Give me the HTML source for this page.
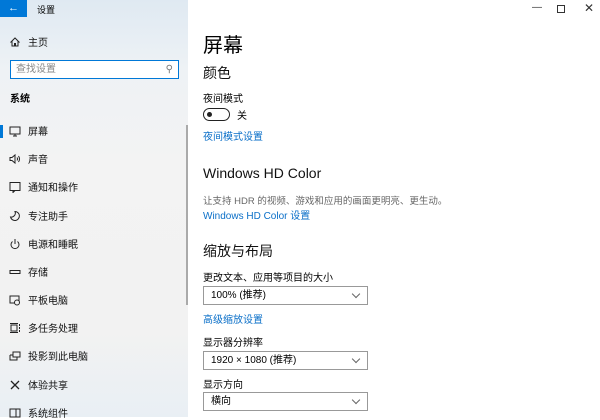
<!DOCTYPE html>
<html><head><meta charset="utf-8"><style>
*{margin:0;padding:0;box-sizing:border-box}
body{width:600px;height:417px;overflow:hidden;background:#fff;font-family:"Liberation Sans","Noto Sans CJK SC",sans-serif;color:#000;position:relative}
.side{position:absolute;left:0;top:0;width:188px;height:417px;background:linear-gradient(180deg,#dfe9f2 0,#eef2f5 70px,#f3f3f3 160px,#f2f2f2 330px,#e9eff4 417px)}
.a{position:absolute;white-space:nowrap}
.s{font-size:10px}
.nav{position:absolute;left:28px;font-size:10px;color:#111;margin-top:-2px}
.ic{position:absolute;left:9px;width:12px;height:12px}
.link{color:#0a6fc8;font-size:10px}
.dd{position:absolute;left:203px;width:165px;height:19px;border:1.5px solid #999;background:#fff;font-size:10px;padding:1px 0 0 7px;line-height:15px}
.dd:after{content:"";position:absolute;right:8px;top:4px;width:5px;height:5px;border-right:1px solid #666;border-bottom:1px solid #666;transform:rotate(45deg)}
</style></head><body>
<div class="side"></div>
<div class="a" style="left:0;top:0;width:27px;height:17px;background:#0078d7;color:#fff;font-size:11px;text-align:center;line-height:16px">←</div>
<div class="a s" style="left:37px;top:3px;font-size:9px">设置</div>
<svg class="ic" style="top:36px" viewBox="0 0 12 12"><path d="M1.5 6.5 6 2l4.5 4.5M3 5v5h2.5V7.5h1V10H9V5" fill="none" stroke="#222" stroke-width="1"/></svg>
<div class="nav" style="top:36px">主页</div>
<div class="a" style="left:10px;top:60px;width:169px;height:19px;border:1.5px solid #0078d7;background:#fff;font-size:10px;color:#888;padding:1px 0 0 5px;line-height:15px">查找设置<span style="position:absolute;right:5px;top:1px;color:#777">⚲</span></div>
<div class="a s" style="left:10px;top:90px;font-weight:bold">系统</div>
<div class="a" style="left:0;top:125px;width:3px;height:13px;background:#0078d7"></div>
<div class="a" style="left:186px;top:125px;width:2px;height:180px;background:#aaa"></div>
<svg class="ic" style="top:125px" viewBox="0 0 12 12"><rect x="1" y="2" width="10" height="7" fill="none" stroke="#222"/><path d="M4 11h4M6 9v2" stroke="#222"/></svg>
<div class="nav" style="top:125px">屏幕</div>
<svg class="ic" style="top:153px" viewBox="0 0 12 12"><path d="M1 4.5h2L6 2v8L3 7.5H1z" fill="none" stroke="#222"/><path d="M8 4.5q1 1.5 0 3M9.5 3q2 3 0 6" fill="none" stroke="#222"/></svg>
<div class="nav" style="top:153px">声音</div>
<svg class="ic" style="top:181px" viewBox="0 0 12 12"><rect x="1" y="1.5" width="10" height="8" fill="none" stroke="#222"/><path d="M4 9.5v2l2-2" fill="none" stroke="#222"/></svg>
<div class="nav" style="top:181px">通知和操作</div>
<svg class="ic" style="top:210px" viewBox="0 0 12 12"><path d="M6 1.5A4.5 4.5 0 1 1 1.5 7 4 4 0 0 0 6 1.5z" fill="none" stroke="#222"/></svg>
<div class="nav" style="top:210px">专注助手</div>
<svg class="ic" style="top:238px" viewBox="0 0 12 12"><path d="M3.5 3.5a4 4 0 1 0 5 0M6 1v5" fill="none" stroke="#222"/></svg>
<div class="nav" style="top:238px">电源和睡眠</div>
<svg class="ic" style="top:266px" viewBox="0 0 12 12"><rect x="1" y="4.5" width="10" height="3" fill="none" stroke="#222"/></svg>
<div class="nav" style="top:266px">存储</div>
<svg class="ic" style="top:294px" viewBox="0 0 12 12"><rect x="1" y="2" width="9" height="7" fill="none" stroke="#222"/><circle cx="8" cy="8.5" r="2.5" fill="#f2f2f2" stroke="#222"/></svg>
<div class="nav" style="top:294px">平板电脑</div>
<svg class="ic" style="top:322px" viewBox="0 0 12 12"><rect x="2" y="3" width="6" height="6" fill="none" stroke="#222"/><path d="M1 1.5h8M1 10.5h8M10.5 2v2M10.5 5v2M10.5 8v2" stroke="#222"/></svg>
<div class="nav" style="top:322px">多任务处理</div>
<svg class="ic" style="top:350px" viewBox="0 0 12 12"><rect x="4" y="2" width="7" height="5" fill="none" stroke="#222"/><path d="M1 5h3M1 5v5h7V7" fill="none" stroke="#222"/></svg>
<div class="nav" style="top:350px">投影到此电脑</div>
<svg class="ic" style="top:379px" viewBox="0 0 12 12"><path d="M2 2l8 8M10 2l-8 8" stroke="#222" stroke-width="1.3"/></svg>
<div class="nav" style="top:379px">体验共享</div>
<svg class="ic" style="top:407px" viewBox="0 0 12 12"><rect x="1" y="2" width="10" height="8" fill="none" stroke="#222"/><path d="M7 2v8" stroke="#222"/></svg>
<div class="nav" style="top:407px">系统组件</div>

<div class="a" style="left:532px;top:2px;font-size:10px;color:#333">—</div>
<div class="a" style="left:557px;top:5px;width:8px;height:8px;border:1px solid #333"></div>
<div class="a" style="left:584px;top:1px;font-size:12px;color:#333">✕</div>

<div class="a" style="left:203px;top:29px;font-size:20px">屏幕</div>
<div class="a" style="left:203px;top:63px;font-size:14px;color:#111">颜色</div>
<div class="a s" style="left:203px;top:90px">夜间模式</div>
<div class="a" style="left:203px;top:108px;width:27px;height:13px;border:1.5px solid #222;border-radius:7px"><div style="position:absolute;left:3px;top:2.5px;width:5px;height:5px;border-radius:50%;background:#222"></div></div>
<div class="a s" style="left:237px;top:107px">关</div>
<div class="a link" style="left:203px;top:128px">夜间模式设置</div>
<div class="a" style="left:203px;top:165px;font-size:14px;color:#111">Windows HD Color</div>
<div class="a" style="left:203px;top:193px;font-size:9.5px;color:#666">让支持 HDR 的视频、游戏和应用的画面更明亮、更生动。</div>
<div class="a link" style="left:203px;top:207px">Windows HD Color 设置</div>
<div class="a" style="left:203px;top:241px;font-size:14px;color:#111">缩放与布局</div>
<div class="a s" style="left:203px;top:269px">更改文本、应用等项目的大小</div>
<div class="dd" style="top:286px">100% (推荐)</div>
<div class="a link" style="left:203px;top:311px">高级缩放设置</div>
<div class="a s" style="left:203px;top:334px">显示器分辨率</div>
<div class="dd" style="top:351px">1920 × 1080 (推荐)</div>
<div class="a s" style="left:203px;top:376px">显示方向</div>
<div class="dd" style="top:392px">横向</div>
</body></html>
